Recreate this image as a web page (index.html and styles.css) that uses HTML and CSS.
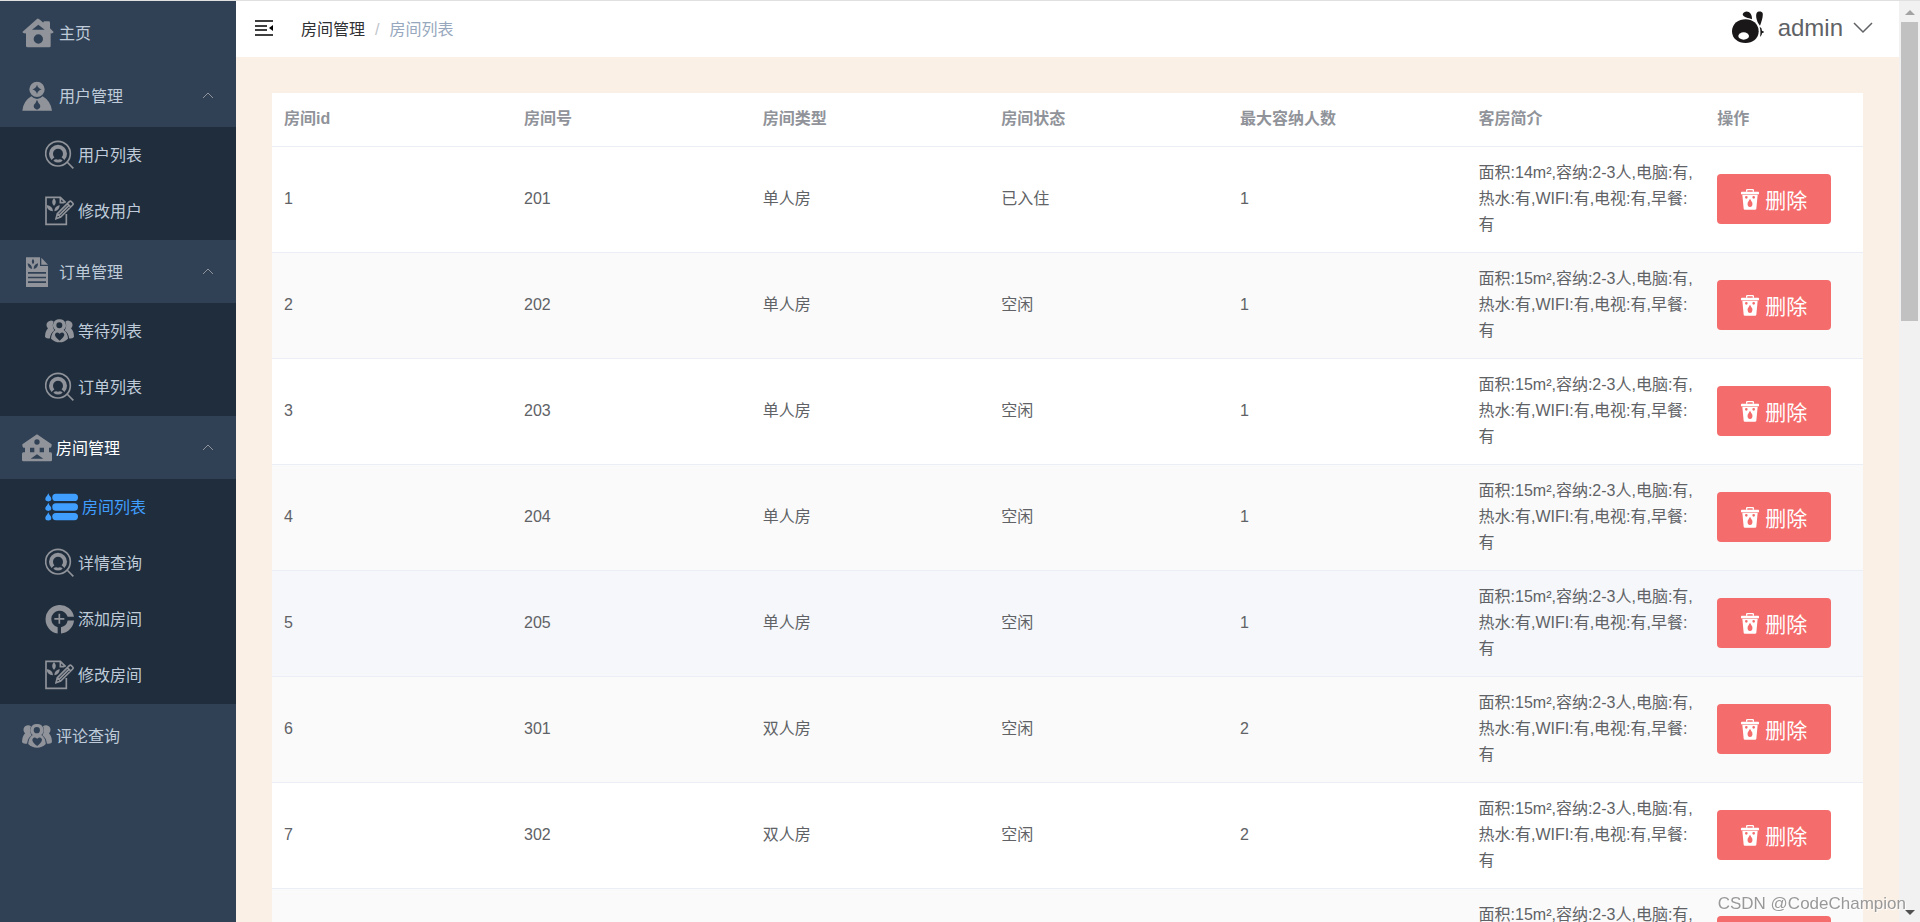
FILE: index.html
```html
<!DOCTYPE html>
<html lang="zh-CN">
<head>
  <meta charset="UTF-8">
  <title>房间列表</title>
  <link rel="stylesheet" href="styles.css">
</head>
<body>

<!-- icons used more than once -->
<svg class="sprite" aria-hidden="true">
  <symbol id="search-user" viewBox="0 0 87 90">
    <circle cx="39" cy="41" r="37" fill="none" stroke="currentColor" stroke-width="5"/>
    <path d="M24 56A21 21 0 1 1 54 56" fill="none" stroke="currentColor" stroke-width="12"/>
    <path d="M25 62Q30 56 39 59Q48 56 53 62Q39 73 25 62Z" fill="currentColor"/>
    <path d="M66 66L85 85" stroke="currentColor" stroke-width="5"/>
  </symbol>
  <symbol id="edit" viewBox="0 0 87 90">
    <path d="M64 54V85H3V4H46L62 20M46 4V20H58" fill="none" stroke="currentColor" stroke-width="5"/>
    <path d="M27 30Q16 18 27 6Q38 18 27 30ZM24 46Q6 45 5 27Q23 29 24 46ZM28 46Q28 31 44 27Q45 42 28 46Z" fill="currentColor"/>
    <path d="M33 68L37 53L73 17Q76 14 79 17L83 21Q86 24 83 27L47 63ZM37 53L47 63M67 23L77 33M42 58L71 29" fill="none" stroke="currentColor" stroke-width="5"/>
  </symbol>
  <symbol id="people" viewBox="0 0 87 70">
    <path d="M26 7A13 13 0 0 0 9 27Q0 36 0 53Q6 59 15 57Q16 42 28 33Q20 20 26 7ZM61 7A13 13 0 0 1 78 27Q87 36 87 53Q81 59 72 57Q71 42 59 33Q67 20 61 7Z" fill="currentColor"/>
    <path fill-rule="evenodd" d="M44 0A18 18 0 0 1 56 32Q68 40 69 58Q58 69 44 69Q29 69 18 58Q19 40 31 32A18 18 0 0 1 44 0ZM34 18A9 9 0 1 0 52 18A9 9 0 1 0 34 18ZM44 64Q29 53 30 45Q34 35 44 43Q54 35 58 45Q58 53 44 64Z" fill="currentColor"/>
  </symbol>
  <symbol id="arrow-up" viewBox="0 0 12 8">
    <path d="M1 6L6 1L11 6" fill="none" stroke="currentColor"/>
  </symbol>
  <symbol id="trash" viewBox="0 0 54 63">
    <path d="M17 8V4Q17 2 19 2H35Q37 2 37 4V8" fill="none" stroke="currentColor" stroke-width="4"/>
    <path d="M2 8H52Q54 8 54 10V16H0V10Q0 8 2 8Z" fill="currentColor"/>
    <path fill-rule="evenodd" d="M4 17H50L46 59Q46 62 42 62H12Q8 62 8 59ZM27 29L34 41Q36 53 27 54Q18 53 20 41ZM12 25a4 4 0 1 0 8 0 4 4 0 1 0-8 0ZM34 25a4 4 0 1 0 8 0 4 4 0 1 0-8 0Z" fill="currentColor"/>
  </symbol>
</svg>

<div class="app">
  <nav class="sidebar">
    <a class="item" href="#">
      <svg class="icon wide" viewBox="0 0 96 90">
        <path fill="currentColor" fill-rule="evenodd" d="M49 2Q53 3 64 14V12Q65 10 68 10H80Q84 10 84 14V31L95 42Q93 47 86 46V84Q86 88 82 88H17Q12 88 12 84V46Q3 47 1 42L44 4Q47 1 49 2ZM30 35H68L49 20ZM35 63a14 14 0 1 0 28 0a14 14 0 1 0-28 0Z"/>
      </svg>
      <span>主页</span>
    </a>

    <a class="item" href="#">
      <svg class="icon wide" viewBox="0 0 96 90">
        <path fill="currentColor" fill-rule="evenodd" d="M22 25a23 23 0 1 0 46 0a23 23 0 1 0-46 0ZM45 11Q48 22 59 25Q48 28 45 39Q42 28 31 25Q42 22 45 11Z"/>
        <path fill="currentColor" fill-rule="evenodd" d="M1 89Q4 60 28 46Q36 54 45 54Q54 54 62 46Q86 60 90 89ZM45 56Q48 65 54 71Q58 81 45 86Q32 81 36 71Q42 65 45 56Z"/>
      </svg>
      <span>用户管理</span>
      <svg class="arrow"><use href="#arrow-up"/></svg>
    </a>
    <div class="submenu">
      <a class="subitem" href="#"><svg class="icon"><use href="#search-user"/></svg><span>用户列表</span></a>
      <a class="subitem" href="#"><svg class="icon"><use href="#edit"/></svg><span>修改用户</span></a>
    </div>

    <a class="item" href="#">
      <svg class="icon wide" viewBox="0 0 96 90">
        <path fill="currentColor" fill-rule="evenodd" d="M12 1H54V27H78V90H12ZM18 45V50H72V45ZM18 59V64H72V59ZM18 73V78H72V73ZM33 22Q26 14 33 5Q40 14 33 22ZM30 36Q17 33 17 19Q30 22 30 36ZM35 36Q35 22 48 19Q49 33 35 36Z"/>
        <path fill="currentColor" d="M58 2L78 23H58Z"/>
      </svg>
      <span>订单管理</span>
      <svg class="arrow"><use href="#arrow-up"/></svg>
    </a>
    <div class="submenu">
      <a class="subitem" href="#"><svg class="icon"><use href="#people"/></svg><span>等待列表</span></a>
      <a class="subitem" href="#"><svg class="icon"><use href="#search-user"/></svg><span>订单列表</span></a>
    </div>

    <a class="item opened" href="#">
      <svg class="icon" viewBox="0 0 90 84">
        <path fill="currentColor" fill-rule="evenodd" d="M45 1L89 31Q90 38 86 41H81V55H86Q90 55 90 60V78Q90 82 86 82H4Q0 82 0 78V60Q0 55 4 55H9V41H4Q0 38 1 31ZM37 24a8 8 0 1 0 16 0a8 8 0 1 0-16 0ZM24 41V55H37V41ZM53 41V55H66V41ZM26 74H64L45 61Z"/>
      </svg>
      <span>房间管理</span>
      <svg class="arrow"><use href="#arrow-up"/></svg>
    </a>
    <div class="submenu">
      <a class="subitem active" href="#">
        <svg class="icon list" viewBox="0 0 100 84">
          <rect x="22" y="2" width="78" height="22" rx="11" fill="currentColor"/>
          <rect x="22" y="31" width="78" height="22" rx="11" fill="currentColor"/>
          <rect x="22" y="60" width="78" height="22" rx="11" fill="currentColor"/>
          <path fill="currentColor" d="M10 0Q12 7 18 13Q22 24 10 25Q-2 24 2 13Q8 7 10 0ZM10 29Q12 36 18 42Q22 53 10 54Q-2 53 2 42Q8 36 10 29ZM10 58Q12 65 18 71Q22 82 10 83Q-2 82 2 71Q8 65 10 58Z"/>
        </svg>
        <span>房间列表</span>
      </a>
      <a class="subitem" href="#"><svg class="icon"><use href="#search-user"/></svg><span>详情查询</span></a>
      <a class="subitem" href="#">
        <svg class="icon" viewBox="0 0 87 87">
          <path fill="currentColor" d="M38 87A43 43 0 1 1 87 37H68A25 25 0 1 0 38 68ZM87 48A43 43 0 0 1 48 87V68A25 25 0 0 0 68 48Z"/>
          <path d="M43 28V58M28 43H58" stroke="currentColor" stroke-width="5"/>
        </svg>
        <span>添加房间</span>
      </a>
      <a class="subitem" href="#"><svg class="icon"><use href="#edit"/></svg><span>修改房间</span></a>
    </div>

    <a class="item" href="#"><svg class="icon"><use href="#people"/></svg><span>评论查询</span></a>
  </nav>

  <div class="main">
    <header class="topbar">
      <button class="fold" type="button" aria-label="折叠菜单">
        <svg viewBox="0 0 18 16">
          <path d="M0 1H18M0 6H12M0 10H12M0 15H18" stroke="currentColor" stroke-width="1.500"/>
          <path d="M18 5V11L14 8Z" fill="currentColor"/>
        </svg>
      </button>
      <div class="breadcrumb">
        <a href="#">房间管理</a>
        <span class="separator">/</span>
        <span class="current">房间列表</span>
      </div>
      <button class="user" type="button">
        <svg class="logo" viewBox="0 0 96 96">
          <path fill="#191718" d="M41 25C60 25 80 38 80 61C80 84 61 96 41 96C18 96 0 83 0 61C0 38 20 25 41 25Z"/>
          <ellipse cx="35" cy="75" rx="16" ry="11" fill="#fff"/>
          <path fill="#191718" d="M32 10C36 0 49-1 56 8C59 13 60 18 60 25C50 20 34 21 32 10ZM74 6C78 0 90 0 92 7C94 16 88 34 84 44C77 37 69 17 74 6Z"/>
          <path fill="#191718" d="M83 47Q90 50 90 59L97 63L90 67Q90 74 84 78Q87 62 83 47Z"/>
        </svg>
        <span>admin</span>
        <svg class="down" viewBox="0 0 20 12"><path d="M1 1L10 10L19 1" fill="none" stroke="currentColor" stroke-width="1.500"/></svg>
      </button>
    </header>

    <main class="content">
      <table>
        <colgroup>
          <col class="first"><col class="col"><col class="col"><col class="col"><col class="col"><col class="col"><col>
        </colgroup>
        <thead>
          <tr>
            <th>房间id</th>
            <th>房间号</th>
            <th>房间类型</th>
            <th>房间状态</th>
            <th>最大容纳人数</th>
            <th>客房简介</th>
            <th>操作</th>
          </tr>
        </thead>
        <tbody id="rooms"></tbody>
      </table>
    </main>
  </div>

  <div class="scrollbar">
    <svg class="up" viewBox="0 0 10 6"><path d="M0 5L5 0L10 5Z"/></svg>
    <div class="thumb"></div>
    <svg class="end" viewBox="0 0 10 6"><path d="M0 0L5 5L10 0Z"/></svg>
  </div>
</div>

<div class="watermark">CSDN @CodeChampion</div>

<script>
  const rooms = [
    [1, 201, "单人房", "已入住", 1, 14],
    [2, 202, "单人房", "空闲", 1, 15],
    [3, 203, "单人房", "空闲", 1, 15],
    [4, 204, "单人房", "空闲", 1, 15],
    [5, 205, "单人房", "空闲", 1, 15],
    [6, 301, "双人房", "空闲", 2, 15],
    [7, 302, "双人房", "空闲", 2, 15],
    [8, 303, "双人房", "空闲", 2, 15]
  ];

  document.getElementById("rooms").innerHTML = rooms.map(([id, no, type, state, max, area]) => `
    <tr class="${id === 5 ? "hover" : ""}">
      <td>${id}</td>
      <td>${no}</td>
      <td>${type}</td>
      <td>${state}</td>
      <td>${max}</td>
      <td>面积:${area}m²,容纳:2-3人,电脑:有,热水:有,WIFI:有,电视:有,早餐:有</td>
      <td><button class="delete" type="button"><svg><use href="#trash"/></svg><span>删除</span></button></td>
    </tr>`).join("");
</script>

</body>
</html>
```
FILE: styles.css
```css
* {
  box-sizing: border-box;
}

body {
  margin: 0;
  font-family: "Liberation Sans", "Noto Sans CJK SC", sans-serif;
  font-size: 16px;
  color: #606266;
}

a {
  text-decoration: none;
  color: inherit;
}

button {
  font-family: inherit;
  border: none;
  cursor: pointer;
}

.sprite {
  display: none;
}

.app {
  display: flex;
  height: 100vh;
  overflow: hidden;
  border-top: 1px solid #e0e0e0;
}

/* sidebar */
.sidebar {
  flex: 0 0 236px;
  background: #304156;
  color: #bfcbd9;
}

.sidebar span {
  padding-bottom: 2px;
}

.item,
.subitem {
  display: flex;
  align-items: center;
  gap: 4px;
}

.item {
  height: 63px;
  padding: 0 22px;
}

.opened {
  color: #fff;
}

.submenu {
  background: #1f2d3d;
  padding-bottom: 1px;
}

.subitem {
  height: 56px;
  padding-left: 45px;
}

.icon {
  width: 29px;
  height: 30px;
  color: #909399;
}

.item .icon {
  width: 30px;
}

.item .wide {
  width: 32px;
  margin-right: 1px;
}

.subitem .list {
  width: 33px;
}

.active,
.active .icon {
  color: #409eff;
}

.arrow {
  width: 12px;
  height: 8px;
  margin-left: auto;
  color: #909399;
}

/* top bar */
.main {
  flex: 1;
  min-width: 0;
  display: flex;
  flex-direction: column;
}

.topbar {
  flex: 0 0 56px;
  display: flex;
  align-items: center;
  padding: 0 26px 2px 19px;
  background: #fff;
}

.fold {
  padding: 0;
  margin-right: 28px;
  background: none;
  color: #000;
}

.fold svg {
  display: block;
  width: 18px;
  height: 16px;
}

.breadcrumb {
  display: flex;
  align-items: baseline;
  gap: 10px;
  color: #303133;
}

.separator {
  color: #c0c4cc;
}

.current {
  color: #97a8be;
}

.user {
  display: flex;
  align-items: center;
  margin-left: auto;
  padding: 0;
  background: none;
  font-size: 24px;
  color: #606266;
}

.logo {
  width: 32px;
  height: 32px;
  margin-right: 14px;
  margin-bottom: 2px;
}

.down {
  width: 20px;
  height: 12px;
  margin-left: 10px;
}

/* table */
.content {
  flex: 1;
  min-height: 0;
  overflow-y: auto;
  scrollbar-width: none;
  padding: 36px;
  background: #faf0e6;
}

table {
  width: 100%;
  table-layout: fixed;
  border-collapse: collapse;
  background: #fff;
}

.first {
  width: 240px;
}

.col {
  width: 15%;
}

th,
td {
  padding: 0 6px 0 12px;
  line-height: 26px;
  text-align: left;
  border-bottom: 1px solid #ebeef5;
}

th {
  height: 53px;
  color: #909399;
}

td {
  height: 106px;
}

tbody tr:nth-child(even) {
  background: #fafafa;
}

tbody tr.hover {
  background: #f5f7fa;
}

.delete {
  display: flex;
  align-items: center;
  gap: 6px;
  height: 50px;
  padding: 0 24px;
  border-radius: 4px;
  background: #f56c6c;
  color: #fff;
  font-size: 21px;
}

.delete svg {
  width: 18px;
  height: 21px;
}

/* scrollbar */
.scrollbar {
  flex: 0 0 21px;
  display: flex;
  flex-direction: column;
  align-items: center;
  padding: 9px 0 6px;
  background: #f1f1f1;
}

.scrollbar svg {
  width: 10px;
  height: 6px;
}

.up {
  fill: #a3a3a3;
}

.end {
  margin-top: auto;
  fill: #505050;
}

.thumb {
  width: 17px;
  height: 33%;
  margin-top: 6px;
  background: #c1c1c1;
}

.watermark {
  position: fixed;
  right: 14px;
  bottom: 8px;
  font-size: 17px;
  color: #999;
  text-shadow: 1px 1px 1px #fff;
}
```
